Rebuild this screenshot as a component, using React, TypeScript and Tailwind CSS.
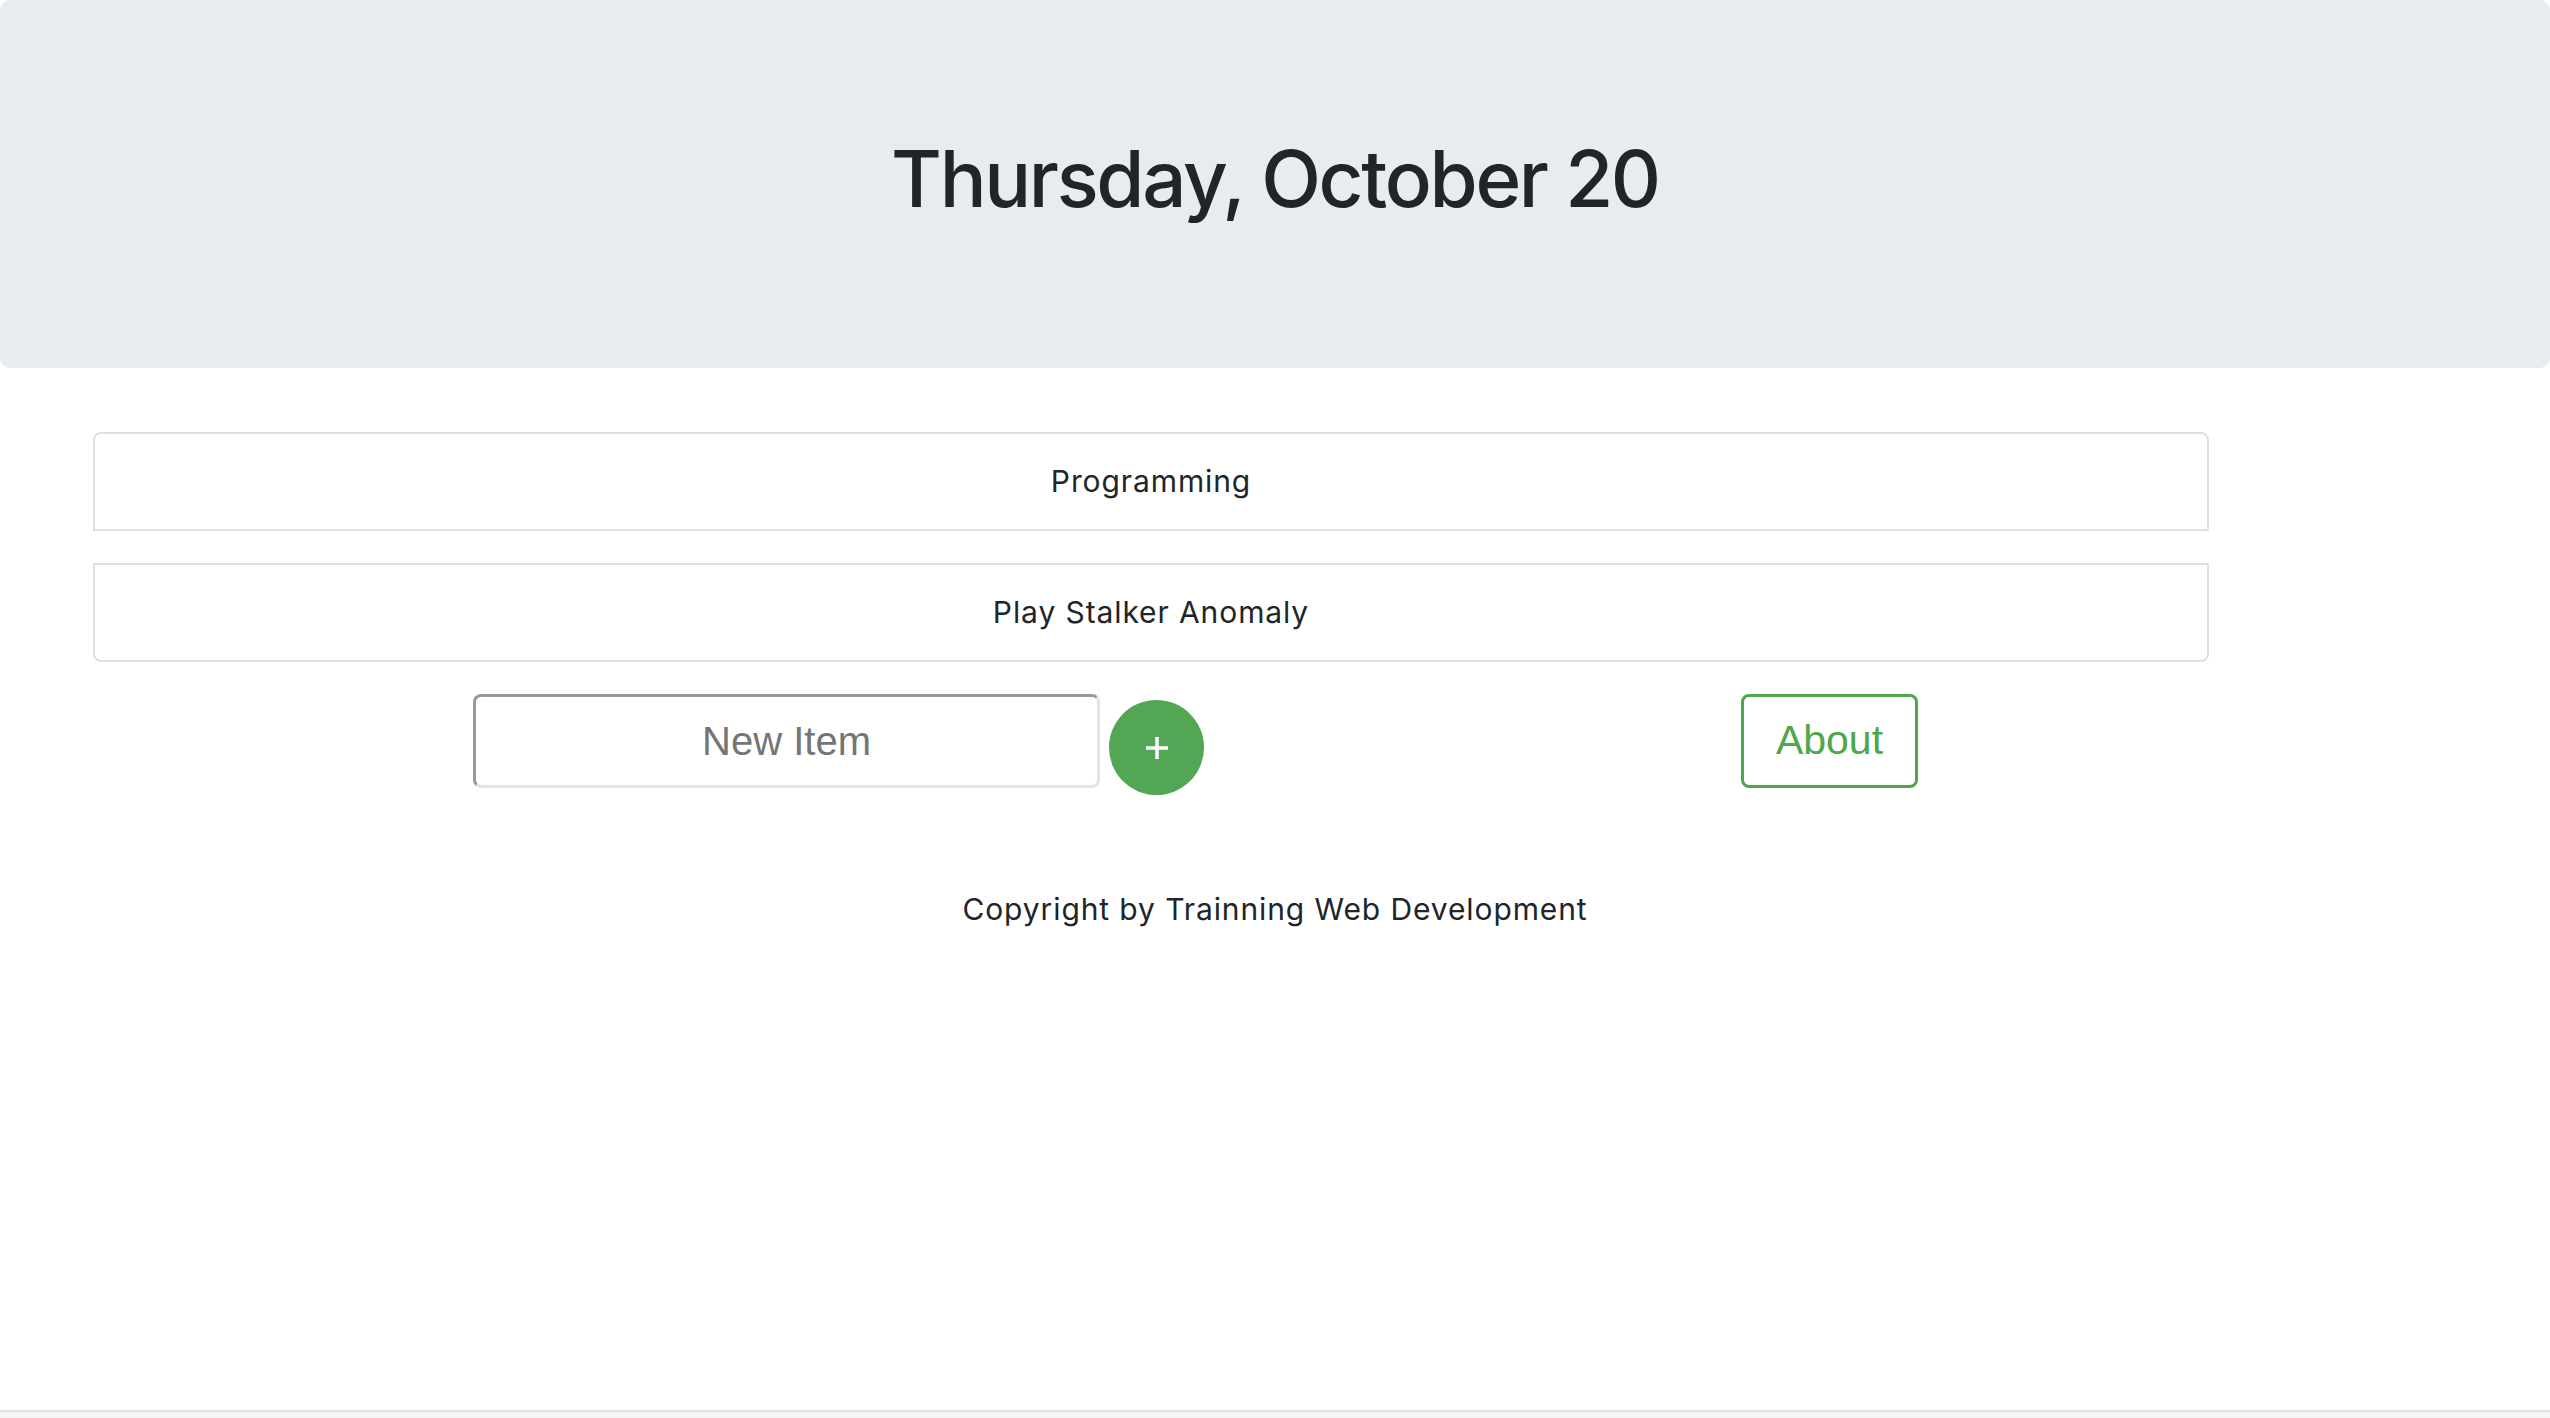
import { useState } from 'react';

const items = ['Programming', 'Play Stalker Anomaly'];

export default function App() {
  const [value, setValue] = useState('');

  return (
    <div className="flex h-[1418px] flex-col bg-white font-['Inter',sans-serif] text-[#212529]">
      <header className="flex h-[368px] shrink-0 justify-center rounded-[10px] bg-[#e9ecef] pt-[140px]">
        <h1 className="text-[78px] leading-none font-medium tracking-[-0.03em]">Thursday, October 20</h1>
      </header>

      <main className="ml-[93px] mt-[64px] w-[2116px]">
        <ul className="flex flex-col gap-[32px]">
          {items.map((item, i) => (
            <li
              key={item}
              className={`flex h-[99px] items-center justify-center border-2 border-[#dfdfdf] text-[30px] tracking-[0.03em] ${
                i === 0 ? 'rounded-t-[8px]' : ''
              } ${i === items.length - 1 ? 'rounded-b-[8px]' : ''}`}
            >
              {item}
            </li>
          ))}
        </ul>

        <div className="mt-[32px] flex items-start pl-[380px]">
          <input
            value={value}
            onChange={(e) => setValue(e.target.value)}
            placeholder="New Item"
            className="h-[94px] w-[627px] rounded-[8px] border-[3px] border-t-[#999999] border-l-[#999999] border-r-[#e3e3e3] border-b-[#e3e3e3] bg-white text-center font-['Liberation_Sans',sans-serif] text-[40px] outline-none placeholder:text-[#757575]"
          />
          <button className="mt-[6px] ml-[9px] flex size-[95px] items-center justify-center rounded-full bg-[#53a653]">
            <svg width="22" height="22" viewBox="0 0 22 22" fill="none" stroke="white" strokeWidth="3.5">
              <path d="M11 0v22M0 11h22" />
            </svg>
          </button>
          <button className="ml-[537px] h-[94px] w-[177px] rounded-[8px] border-[3px] border-[#4fa64c] font-['Liberation_Sans',sans-serif] text-[41px] text-[#4fa64c]">
            About
          </button>
        </div>
      </main>

      <footer className="mt-[99px] text-center text-[30px] leading-none tracking-[0.03em]">
        Copyright by Trainning Web Development
      </footer>

      <div className="mt-auto h-[8px] border-t-2 border-[#e0e0e0] bg-[#f5f5f5]" />
    </div>
  );
}
